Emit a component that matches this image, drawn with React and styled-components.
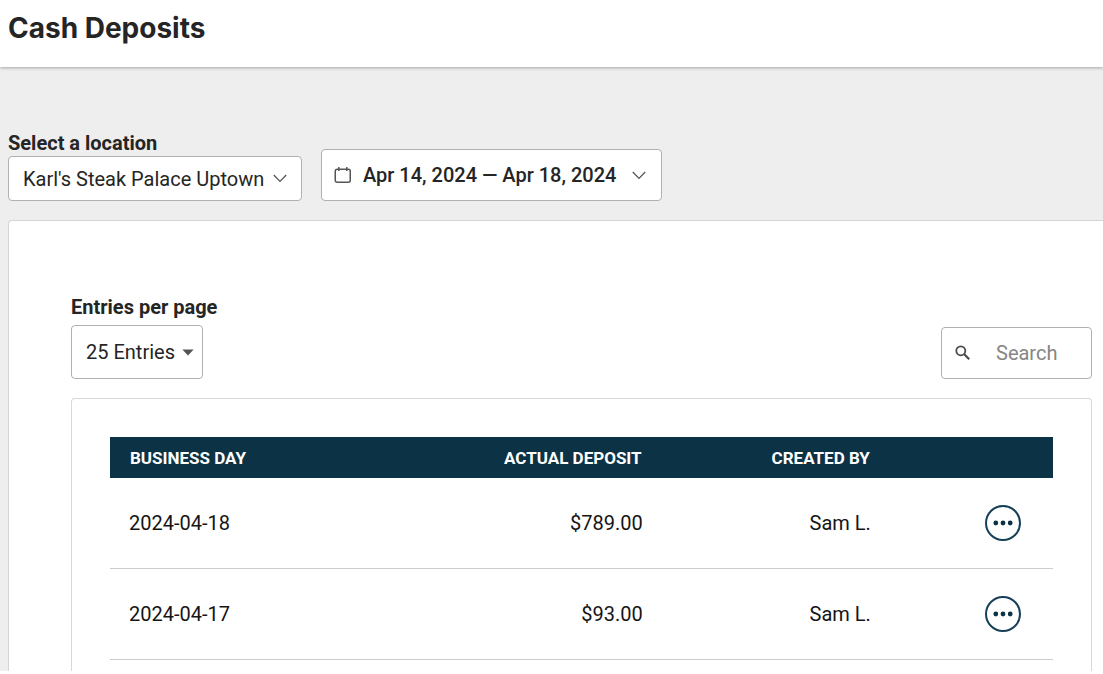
import React from "react";
import styled, { createGlobalStyle } from "styled-components";

const GlobalStyle = createGlobalStyle`
  *, *::before, *::after { box-sizing: border-box; }
  body {
    margin: 0;
    background: #fff;
    color: #252525;
    font-family: Roboto, "Liberation Sans", sans-serif;
    font-size: 20px;
    line-height: 24px;
  }
`;

const Header = styled.header`
  position: relative;
  padding: 12px 8px 23px;
  background: #fff;
  box-shadow: 0 1px 3px rgba(0, 0, 0, 0.3);
`;

const Title = styled.h1`
  margin: 0;
  font-family: Inter, sans-serif;
  font-size: 28px;
  line-height: 32px;
  font-weight: 700;
`;

const Main = styled.main`
  padding: 64px 0 0 8px;
  background: #eee;
`;

const Filters = styled.div`
  display: flex;
  align-items: flex-end;
  gap: 19px;
  margin-bottom: 19px;
`;

const Field = styled.div`
  display: flex;
  flex-direction: column;
  align-items: flex-start;
  gap: ${(p) => p.$gap || 0}px;
`;

const Label = styled.label`
  font-size: 20px;
  line-height: 24px;
  font-weight: 700;
`;

const SelectBox = styled.div`
  display: grid;
  align-items: center;
  width: ${(p) => p.$width}px;

  > * { grid-area: 1 / 1; }
  > svg { justify-self: end; margin-right: ${(p) => p.$inset}px; pointer-events: none; }
`;

const Select = styled.select`
  appearance: none;
  width: 100%;
  height: ${(p) => p.$height}px;
  padding: 0 14px;
  border: 1px solid #b0b0b0;
  border-radius: 4px;
  background: #fff;
  color: inherit;
  font: inherit;
`;

const DateButton = styled.button`
  display: flex;
  align-items: center;
  width: 341px;
  height: 52px;
  padding: 0 15px 0 12px;
  border: 1px solid #b0b0b0;
  border-radius: 4px;
  background: #fff;
  color: inherit;
  font: inherit;
  font-weight: 500;

  span { flex: 1; padding-left: 11px; text-align: left; white-space: nowrap; }
`;

const Panel = styled.section`
  padding: 74px 11px 0 62px;
  border: solid #d4d4d4;
  border-width: 1px 0 0 1px;
  border-top-left-radius: 4px;
  background: #fff;
`;

const Tools = styled.div`
  display: flex;
  align-items: flex-end;
  justify-content: space-between;
  margin-bottom: 19px;
`;

const SearchBox = styled.label`
  display: flex;
  align-items: center;
  width: 151px;
  height: 52px;
  padding-left: 12px;
  border: 1px solid #b0b0b0;
  border-radius: 4px;
`;

const SearchInput = styled.input`
  flex: 1;
  min-width: 0;
  height: 100%;
  padding: 0 0 0 24px;
  border: 0;
  outline: 0;
  background: transparent;
  color: inherit;
  font: inherit;

  &::placeholder { color: #858585; opacity: 1; }
`;

const Card = styled.div`
  padding: 38px 38px 11px;
  border: solid #d8d8d8;
  border-width: 1px 1px 0;
  border-radius: 4px 4px 0 0;
`;

const Table = styled.table`
  width: 100%;
  border-collapse: separate;
  border-spacing: 0;
  table-layout: fixed;
  color: #151515;
`;

const HeadCell = styled.th`
  width: ${(p) => p.$width};
  height: 41px;
  padding: 0 20px;
  background: #0c3246;
  color: #fff;
  font-size: 17px;
  line-height: 20px;
  font-weight: 700;
  text-align: ${(p) => p.$align || "left"};
`;

const Cell = styled.td`
  height: 91px;
  padding: 0 19px;
  border-bottom: 1px solid #ccc;
  text-align: ${(p) => p.$align || "left"};
`;

const ActionCell = styled(Cell)`
  padding-right: 32px;
  text-align: right;
`;

const MoreButton = styled.button`
  display: inline-flex;
  align-items: center;
  justify-content: center;
  width: 36px;
  height: 36px;
  padding: 0;
  border: 2px solid #164058;
  border-radius: 50%;
  background: #fff;
  color: #0c3246;
  vertical-align: middle;
`;

const Chevron = () => (
  <svg width="14" height="9" viewBox="0 0 14 9" fill="none" stroke="#555" strokeWidth="1.3" aria-hidden="true">
    <path d="M.8 1 7 7.4 13.2 1" />
  </svg>
);

const Caret = () => (
  <svg width="12" height="7" viewBox="0 0 12 7" aria-hidden="true">
    <path d="M.3.5h11.4L6 6.5z" fill="#555" />
  </svg>
);

const Calendar = () => (
  <svg width="18" height="18" viewBox="0 0 18 18" fill="none" stroke="#555" strokeWidth="1.5" aria-hidden="true">
    <rect x="1.25" y="3.25" width="15" height="13" rx="2" />
    <path d="M4.8 1v4M12.8 1v4" />
  </svg>
);

const Magnifier = () => (
  <svg width="18" height="18" viewBox="0 0 18 18" fill="none" stroke="#4a4a4a" aria-hidden="true">
    <circle cx="6.8" cy="6.8" r="4.5" strokeWidth="1.8" />
    <path d="m10.2 10.2 5 5" strokeWidth="2.2" />
  </svg>
);

const Dots = () => (
  <svg width="20" height="6" viewBox="0 0 20 6" fill="currentColor" aria-hidden="true">
    <circle cx="2.8" cy="3" r="2.4" />
    <circle cx="10" cy="3" r="2.4" />
    <circle cx="17.2" cy="3" r="2.4" />
  </svg>
);

const deposits = [
  { day: "2024-04-18", amount: "$789.00", by: "Sam L." },
  { day: "2024-04-17", amount: "$93.00", by: "Sam L." },
];

export default function App() {
  return (
    <>
      <GlobalStyle />
      <Header>
        <Title>Cash Deposits</Title>
      </Header>
      <Main>
        <Filters>
          <Field $gap={1}>
            <Label htmlFor="location">Select a location</Label>
            <SelectBox $width={294} $inset={15}>
              <Select id="location" $height={45}>
                <option>Karl's Steak Palace Uptown</option>
              </Select>
              <Chevron />
            </SelectBox>
          </Field>
          <DateButton type="button">
            <Calendar />
            <span>Apr 14, 2024 — Apr 18, 2024</span>
            <Chevron />
          </DateButton>
        </Filters>
        <Panel>
          <Tools>
            <Field $gap={6}>
              <Label htmlFor="entries">Entries per page</Label>
              <SelectBox $width={132} $inset={9}>
                <Select id="entries" $height={54}>
                  <option>25 Entries</option>
                </Select>
                <Caret />
              </SelectBox>
            </Field>
            <SearchBox>
              <Magnifier />
              <SearchInput type="text" placeholder="Search" aria-label="Search" />
            </SearchBox>
          </Tools>
          <Card>
            <Table>
              <thead>
                <tr>
                  <HeadCell scope="col" $width="32%">BUSINESS DAY</HeadCell>
                  <HeadCell scope="col" $width="26.5%" $align="right">ACTUAL DEPOSIT</HeadCell>
                  <HeadCell scope="col" $width="24.2%" $align="right">CREATED BY</HeadCell>
                  <HeadCell scope="col" aria-label="Actions" />
                </tr>
              </thead>
              <tbody>
                {deposits.map((d) => (
                  <tr key={d.day}>
                    <Cell>{d.day}</Cell>
                    <Cell $align="right">{d.amount}</Cell>
                    <Cell $align="right">{d.by}</Cell>
                    <ActionCell>
                      <MoreButton type="button" aria-label={`Actions for ${d.day}`}>
                        <Dots />
                      </MoreButton>
                    </ActionCell>
                  </tr>
                ))}
              </tbody>
            </Table>
          </Card>
        </Panel>
      </Main>
    </>
  );
}
